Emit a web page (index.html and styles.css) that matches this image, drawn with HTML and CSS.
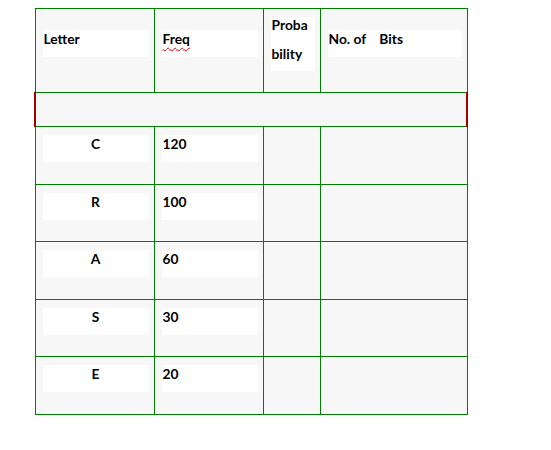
FILE: index.html
```html
<!DOCTYPE html>
<html>
<head>
<meta charset="utf-8">
<link rel="stylesheet" href="styles.css">
</head>
<body>
<table class="freq-table">
  <colgroup>
    <col class="c-letter"><col class="c-freq"><col class="c-prob"><col class="c-bits">
  </colgroup>
  <tr class="head-row">
    <td><div class="box">Letter</div></td>
    <td class="freq-cell"><div class="box"><span class="spell">Freq</span></div></td>
    <td class="prob-cell"><div class="box tall"><div class="two-line">Proba<br>bility</div></div></td>
    <td class="bits-cell"><div class="box">No. of&nbsp;&nbsp;&nbsp; Bits</div></td>
  </tr>
  <tr class="gap-row"><td colspan="4"></td></tr>
  <tr class="data-row">
    <td><div class="box center">C</div></td>
    <td class="freq-cell"><div class="box">120</div></td>
    <td></td><td></td>
  </tr>
  <tr class="data-row">
    <td><div class="box center">R</div></td>
    <td class="freq-cell"><div class="box">100</div></td>
    <td></td><td></td>
  </tr>
  <tr class="data-row">
    <td><div class="box center">A</div></td>
    <td class="freq-cell"><div class="box">60</div></td>
    <td></td><td></td>
  </tr>
  <tr class="data-row">
    <td><div class="box center">S</div></td>
    <td class="freq-cell"><div class="box">30</div></td>
    <td></td><td></td>
  </tr>
  <tr class="data-row">
    <td><div class="box center">E</div></td>
    <td class="freq-cell"><div class="box">20</div></td>
    <td></td><td></td>
  </tr>
</table>
</body>
</html>
```
FILE: styles.css
```css
html, body {
  background: #ffffff;
}
body {
  margin: 8px 0 0 34px;
  font-family: "Lato", "Liberation Sans", sans-serif;
  font-weight: 700;
  font-size: 13.8px;
  color: #000;
}
.freq-table {
  border-collapse: collapse;
  table-layout: fixed;
  width: 432px;
}
.c-letter { width: 119px; }
.c-freq { width: 109px; }
.c-prob { width: 57px; }
.c-bits { width: 147px; }

.freq-table td {
  border: 1px solid #008000;
  background: #f7f7f7;
  padding: 0 5px 0 7px;
  vertical-align: top;
}
.head-row td {
  height: 62px;
  padding-top: 21px;
}
.head-row td.prob-cell {
  height: 75px;
  padding-top: 8px;
}
.gap-row td {
  height: 33px;
  padding: 0;
  border-left: 2px solid #a00000;
  border-right: 2px solid #a00000;
}
.data-row td {
  height: 48.6px;
  padding-top: 8px;
}
.box {
  background: #ffffff;
  height: 27px;
  line-height: 18px;
  padding-left: 1px;
  white-space: nowrap;
}
.box.center {
  text-align: center;
  padding-left: 0;
}
.box.tall {
  height: 54px;
  overflow: hidden;
}
.two-line {
  line-height: 28.5px;
  margin-top: -6px;
}
.spell {
  text-decoration: underline wavy #e00000 1px;
  text-underline-offset: 3px;
  text-decoration-skip-ink: none;
}
```
